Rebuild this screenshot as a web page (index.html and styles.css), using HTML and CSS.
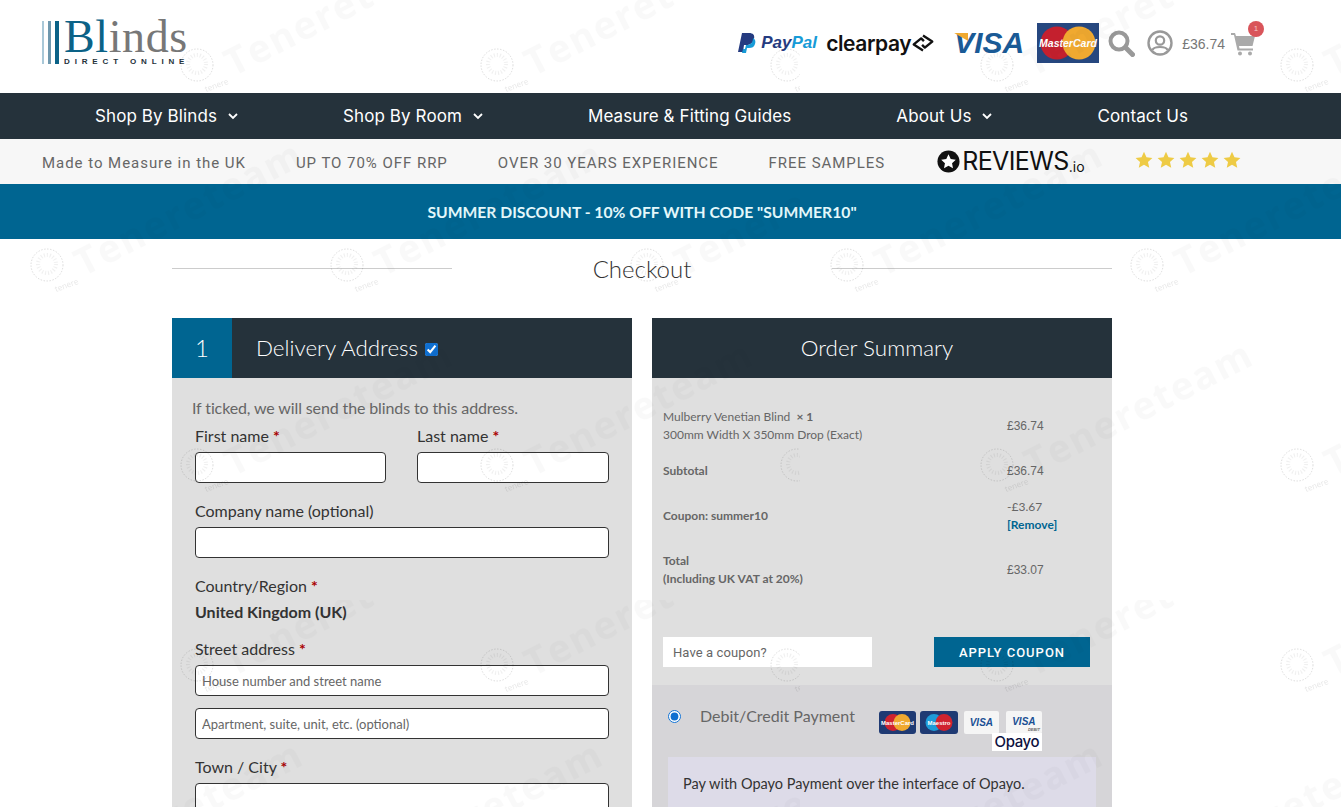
FILE: index.html
```html
<!DOCTYPE html>
<html lang="en">
<head>
  <meta charset="UTF-8">
  <meta name="viewport" content="width=device-width, initial-scale=1.0">
  <title>Checkout - Blinds Direct Online</title>
  <link rel="stylesheet" href="styles.css">
</head>
<body>
<div class="page">

  <!-- Top header -->
  <header class="site-header">
    <a class="logo" href="#">
      <span class="logo-bars"><i></i><i></i><i></i></span>
      <span class="logo-text">
        <span class="logo-name"><b>Bl</b>inds</span>
        <span class="logo-sub">DIRECT ONLINE</span>
      </span>
    </a>
    <div class="header-right">
      <span class="paypal">
        <svg width="18" height="20" viewBox="0 0 18 20"><path fill="#253b80" d="M4 0h7c4 0 6 2 5 6-1 4-4 6-8 6H6l-1 7H0z"/><path fill="#179bd7" d="M15 5c2 1 3 3 2 6-1 3-3 4-6 4H9l-1 5H4l1-4h2l1-4h1c3 0 6-2 6-7z"/></svg>
        <span class="paypal-text"><b>Pay</b><i>Pal</i></span>
      </span>
      <span class="clearpay">clearpay<svg width="24" height="22" viewBox="0 0 26 22"><path fill="none" stroke="#111" stroke-width="2.600" stroke-linejoin="round" d="M13 3l10 6.500-8 6.500-3-3M13 19L3 12.500l8-6.500 3 3"/></svg></span>
      <span class="visa"><span class="visa-corner"></span>VISA</span>
      <svg class="mastercard" width="62" height="40" viewBox="0 0 62 40">
        <rect width="62" height="40" fill="#26477f"/>
        <circle cx="20" cy="20" r="16.500" fill="#c4202e"/>
        <circle cx="42" cy="20" r="16.500" fill="#f0a930"/>
        <text x="31" y="24" class="mc-text">MasterCard</text>
      </svg>
      <svg class="icon-search" width="27" height="27" viewBox="0 0 27 27"><circle cx="11" cy="11" r="8.500" fill="none" stroke="#999" stroke-width="4"/><path d="M17.500 17.500l7 7" stroke="#999" stroke-width="5" stroke-linecap="round"/></svg>
      <svg class="icon-user" width="26" height="26" viewBox="0 0 26 26"><circle cx="13" cy="13" r="11.500" fill="none" stroke="#999" stroke-width="2.400"/><circle cx="13" cy="10.500" r="4.200" fill="none" stroke="#999" stroke-width="2.200"/><path d="M5.500 20c1.500-4 13.500-4 15 0" fill="none" stroke="#999" stroke-width="2.200"/></svg>
      <span class="cart-total">£36.74</span>
      <span class="cart">
        <svg width="25" height="24" viewBox="0 0 25 24"><path fill="#aaa" d="M0 1h4l1 3h19l-2.500 10H8l.5 2.500H22V18.500H6.500L3 3H0z"/><circle cx="9" cy="21.500" r="2" fill="#aaa"/><circle cx="19" cy="21.500" r="2" fill="#aaa"/></svg>
        <span class="cart-badge">1</span>
      </span>
    </div>
  </header>

  <!-- Main menu -->
  <nav class="main-nav">
    <a href="#">Shop By Blinds <svg class="chev" width="10" height="7" viewBox="0 0 10 7"><path d="M1 1l4 4 4-4" fill="none" stroke="#fff" stroke-width="1.800"/></svg></a>
    <a href="#">Shop By Room <svg class="chev" width="10" height="7" viewBox="0 0 10 7"><path d="M1 1l4 4 4-4" fill="none" stroke="#fff" stroke-width="1.800"/></svg></a>
    <a href="#">Measure &amp; Fitting Guides</a>
    <a href="#">About Us <svg class="chev" width="10" height="7" viewBox="0 0 10 7"><path d="M1 1l4 4 4-4" fill="none" stroke="#fff" stroke-width="1.800"/></svg></a>
    <a href="#">Contact Us</a>
  </nav>

  <!-- USP strip -->
  <div class="usp-strip">
    <span>Made to Measure in the UK</span>
    <span>UP TO 70% OFF RRP</span>
    <span>OVER 30 YEARS EXPERIENCE</span>
    <span>FREE SAMPLES</span>
    <span class="reviews">
      <svg width="23" height="23" viewBox="0 0 24 24"><circle cx="12" cy="12" r="11.500" fill="#111"/><path fill="#fff" d="M12 4.500l2.300 4.900 5.300.7-3.900 3.700 1 5.300-4.700-2.600-4.700 2.600 1-5.300-3.900-3.700 5.300-.7z"/></svg>
      <span class="reviews-name">REVIEWS</span><span class="reviews-io">.io</span>
    </span>
    <span class="stars">
      <svg width="18" height="18" viewBox="0 0 24 24"><path id="star" fill="#eecb45" d="M12 1l3.300 7.300 7.900.9-5.900 5.300 1.700 7.800L12 18.300 5 22.300l1.700-7.800L.8 9.200l7.900-.9z"/></svg>
      <svg width="18" height="18" viewBox="0 0 24 24"><use href="#star"/></svg>
      <svg width="18" height="18" viewBox="0 0 24 24"><use href="#star"/></svg>
      <svg width="18" height="18" viewBox="0 0 24 24"><use href="#star"/></svg>
      <svg width="18" height="18" viewBox="0 0 24 24"><use href="#star"/></svg>
    </span>
  </div>

  <div class="promo">SUMMER DISCOUNT - 10% OFF WITH CODE "SUMMER10"</div>

  <div class="checkout-title"><span>Checkout</span></div>

  <div class="columns">

    <!-- Delivery form -->
    <section class="col">
      <div class="col-head">
        <span class="step">1</span>
        <h2>Delivery Address</h2>
        <input type="checkbox" class="ship-check" checked>
      </div>
      <div class="col-body form-body">
        <p class="hint">If ticked, we will send the blinds to this address.</p>
        <div class="field-row">
          <div class="field">
            <label>First name <em>*</em></label>
            <input type="text">
          </div>
          <div class="field">
            <label>Last name <em>*</em></label>
            <input type="text">
          </div>
        </div>
        <div class="field">
          <label>Company name (optional)</label>
          <input type="text">
        </div>
        <div class="field country">
          <label>Country/Region <em>*</em></label>
          <strong>United Kingdom (UK)</strong>
        </div>
        <div class="field">
          <label>Street address <em>*</em></label>
          <input type="text" placeholder="House number and street name">
          <input type="text" class="second-line" placeholder="Apartment, suite, unit, etc. (optional)">
        </div>
        <div class="field">
          <label>Town / City <em>*</em></label>
          <input type="text">
        </div>
      </div>
    </section>

    <!-- Order summary -->
    <section class="col">
      <div class="col-head summary-head">
        <h2>Order Summary</h2>
      </div>
      <div class="col-body summary-body">
        <table class="order-table">
          <tr>
            <td>Mulberry Venetian Blind &nbsp;<b>× 1</b><br>300mm Width X 350mm Drop (Exact)</td>
            <td class="price">£36.74</td>
          </tr>
          <tr>
            <th>Subtotal</th>
            <td class="price">£36.74</td>
          </tr>
          <tr>
            <th>Coupon: summer10</th>
            <td>-£3.67<br><a href="#">[Remove]</a></td>
          </tr>
          <tr>
            <th>Total<br>(Including UK VAT at 20%)</th>
            <td class="price">£33.07</td>
          </tr>
        </table>
        <div class="coupon-row">
          <input type="text" placeholder="Have a coupon?">
          <button type="button">APPLY COUPON</button>
        </div>
      </div>
      <div class="payment">
        <div class="payment-head">
          <input type="radio" checked>
          <span class="payment-name">Debit/Credit Payment</span>
          <span class="cards">
            <svg width="37" height="23" viewBox="0 0 37 23"><rect width="37" height="23" rx="3" fill="#1f3a73"/><circle cx="14" cy="11.500" r="8.500" fill="#d0232f"/><circle cx="23" cy="11.500" r="8.500" fill="#f0a930"/><text x="18.500" y="14" class="card-mini">MasterCard</text></svg>
            <svg width="38" height="23" viewBox="0 0 38 23"><rect width="38" height="23" rx="3" fill="#1f3a73"/><circle cx="14" cy="11.500" r="8.500" fill="#1d9bd8"/><circle cx="24" cy="11.500" r="8.500" fill="#d0232f"/><text x="19" y="14" class="card-mini">Maestro</text></svg>
            <span class="card-visa">VISA</span>
            <span class="card-visa debit">VISA<small>DEBIT</small></span>
            <span class="opayo">Opayo</span>
          </span>
        </div>
        <div class="payment-desc">Pay with Opayo Payment over the interface of Opayo.</div>
      </div>
    </section>
  </div>

  <!-- Screenshot watermark -->
  <svg class="watermark" width="1341" height="807">
    <defs>
      <g id="wm">
        <circle cx="0" cy="0" r="16" fill="none" stroke="#000" stroke-opacity=".12" stroke-width="1" stroke-dasharray="1.500 1.500"/>
        <circle cx="0" cy="-1" r="9" fill="none" stroke="#000" stroke-opacity=".06" stroke-width="4" stroke-dasharray="1 2"/>
        <text x="9" y="27" class="wm-small" transform="rotate(-20 9 27)">tenere</text>
        <text x="36" y="12" class="wm-big" transform="rotate(-27 36 12)">Tenereteam</text>
      </g>
      <pattern id="wm-tile" width="800" height="600" patternUnits="userSpaceOnUse">
        <use href="#wm" x="197" y="65"/>
        <use href="#wm" x="497" y="65"/>
        <use href="#wm" x="787" y="65"/>
        <use href="#wm" x="47" y="265"/>
        <use href="#wm" x="347" y="265"/>
        <use href="#wm" x="647" y="265"/>
        <use href="#wm" x="197" y="465"/>
        <use href="#wm" x="497" y="465"/>
        <use href="#wm" x="797" y="465"/>
      </pattern>
    </defs>
    <rect width="1341" height="807" fill="url(#wm-tile)"/>
  </svg>
</div>
</body>
</html>
```

FILE: styles.css
```css
/* Reset */
* {
  box-sizing: border-box;
  margin: 0;
  padding: 0;
}

body {
  font-family: 'Lato', sans-serif;
  color: #333;
  background: #fff;
}

.page {
  position: relative;
  height: 100vh;
  overflow: hidden;
}

a {
  text-decoration: none;
}

/* Header */
.site-header {
  height: 93px;
  display: flex;
  justify-content: space-between;
  padding: 20px 85px 0 42px;
}

.logo {
  display: flex;
  align-items: flex-start;
  gap: 5px;
  height: 46px;
}

.logo-bars {
  display: flex;
  gap: 4px;
  height: 43px;
  margin-top: 1px;
}

.logo-bars i {
  width: 2px;
  background: #a9c8d8;
}

.logo-bars i:nth-child(2) {
  width: 3px;
  background: #6f98ae;
}

.logo-bars i:nth-child(3) {
  width: 4px;
  background: #0b6287;
}

.logo-text {
  display: flex;
  flex-direction: column;
}

.logo-name {
  font-family: 'Liberation Serif', serif;
  font-size: 46px;
  line-height: 34px;
  height: 38px;
  letter-spacing: .6px;
  color: #777;
}

.logo-name b {
  font-weight: 400;
  color: #0b6287;
}

.logo-sub {
  font-family: 'Liberation Sans', sans-serif;
  font-size: 8px;
  font-weight: 700;
  letter-spacing: 4.850px;
  line-height: 8px;
  color: #25323b;
  white-space: nowrap;
}

.header-right {
  display: flex;
  align-items: center;
  height: 46px;
  color: #777;
}

.paypal {
  display: flex;
  align-items: center;
  gap: 5px;
  width: 88px;
}

.paypal-text {
  font-family: 'Liberation Sans', sans-serif;
  font-size: 17px;
  font-style: italic;
  font-weight: 700;
}

.paypal-text b {
  color: #253b80;
}

.paypal-text i {
  color: #179bd7;
}

.clearpay {
  display: flex;
  align-items: center;
  width: 128px;
  font-family: 'Inter', sans-serif;
  font-size: 21px;
  font-weight: 600;
  letter-spacing: -.4px;
  color: #111;
}

.visa {
  position: relative;
  width: 83px;
  font-family: 'Liberation Sans', sans-serif;
  font-size: 30px;
  font-style: italic;
  font-weight: 700;
  letter-spacing: 0;
  color: #1a5a96;
}

.visa-corner {
  position: absolute;
  left: 0;
  top: 7px;
  width: 14px;
  height: 8px;
  background: #f0a930;
  clip-path: polygon(0 0, 100% 0, 100% 100%);
}

.mc-text {
  font-family: 'Liberation Sans', sans-serif;
  font-size: 10.500px;
  font-style: italic;
  font-weight: 700;
  fill: #fff;
  text-anchor: middle;
}

.icon-search {
  margin-left: 9px;
}

.icon-user {
  margin-left: 12px;
}

.cart-total {
  margin-left: 9px;
  font-family: 'Liberation Sans', sans-serif;
  font-size: 14px;
  color: #777;
  padding-top: 2px;
}

.cart {
  position: relative;
  display: flex;
  margin-left: 6px;
  padding-top: 2px;
}

.cart-badge {
  position: absolute;
  right: -8px;
  top: -9px;
  width: 16px;
  height: 16px;
  border-radius: 50%;
  background: #d9545a;
  color: #f5c5c5;
  font-family: 'Liberation Sans', sans-serif;
  font-size: 8px;
  line-height: 16px;
  text-align: center;
}

/* Main menu */
.main-nav {
  height: 46px;
  display: flex;
  align-items: center;
  gap: 105px;
  padding-left: 95px;
  background: #25323b;
}

.main-nav a {
  display: flex;
  align-items: center;
  font-family: 'Inter', sans-serif;
  font-size: 17px;
  letter-spacing: .1px;
  color: #fff;
  white-space: nowrap;
}

.chev {
  margin-left: 11px;
}

/* USP strip */
.usp-strip {
  height: 45px;
  display: flex;
  align-items: center;
  gap: 50px;
  padding: 2px 0 0 42px;
  background: #f7f7f7;
  font-family: 'Roboto', sans-serif;
  font-size: 15px;
  letter-spacing: .96px;
  color: #666;
  white-space: nowrap;
}

.reviews {
  display: flex;
  align-items: center;
  margin: -3px 0 0 2px;
  color: #111;
  letter-spacing: 0;
}

.reviews-name {
  font-family: 'Inter', sans-serif;
  font-size: 25px;
  font-weight: 400;
  letter-spacing: -.6px;
  margin-left: 2px;
}

.reviews-io {
  font-family: 'Inter', sans-serif;
  font-size: 14px;
  align-self: flex-end;
  margin-bottom: 1px;
}

.stars {
  display: flex;
  gap: 4px;
  margin-top: -5px;
}

/* Promo bar */
.promo {
  height: 55px;
  line-height: 57px;
  padding-right: 57px;
  background: #006591;
  color: #e4f8fb;
  font-size: 15.700px;
  font-weight: 700;
  text-align: center;
}

/* Page title */
.checkout-title {
  display: flex;
  align-items: center;
  width: 940px;
  height: 58px;
  margin: 0 0 21px 172px;
}

.checkout-title::before,
.checkout-title::after {
  content: "";
  flex: 0 0 280px;
  height: 1px;
  background: #ccc;
}

.checkout-title span {
  flex: 1;
  text-align: center;
  font-size: 24px;
  font-weight: 300;
  color: #333;
}

/* Two columns */
.columns {
  display: flex;
  gap: 20px;
  width: 940px;
  margin-left: 172px;
}

.col {
  flex: 0 0 460px;
}

.col-head {
  display: flex;
  align-items: center;
  height: 60px;
  background: #25323b;
  color: #fff;
}

.col-head h2 {
  padding-bottom: 2px;
  font-size: 22.400px;
  font-weight: 300;
}

.step {
  flex: 0 0 60px;
  height: 60px;
  line-height: 60px;
  text-align: center;
  background: #006591;
  font-size: 24px;
  font-weight: 300;
}

.step + h2 {
  margin-left: 24px;
}

.ship-check {
  width: 13px;
  height: 13px;
  margin-left: 7px;
  margin-top: 2px;
  accent-color: #0f6fd0;
}

.summary-head {
  justify-content: center;
  padding-right: 10px;
}

.col-body {
  background: #dfdfdf;
}

/* Form */
.form-body {
  padding: 20px 23px 40px;
}

.hint {
  margin: 0 0 9px -3px;
  font-size: 16px;
  line-height: 19px;
  letter-spacing: -.12px;
  color: #666;
}

.field-row {
  display: grid;
  grid-template-columns: 191px 192px;
  gap: 31px;
}

.field {
  margin-bottom: 18px;
}

.field label {
  display: block;
  font-size: 16px;
  line-height: 20px;
  margin-bottom: 6px;
  color: #333;
}

.field em {
  font-style: normal;
  font-weight: 700;
  color: #a00;
}

.field input {
  display: block;
  width: 100%;
  height: 31px;
  padding: 0 6px;
  border: 1px solid #333;
  border-radius: 4px;
  background: #fff;
  font-family: 'Lato', sans-serif;
  font-size: 13px;
}

.field input::placeholder {
  color: #666;
}

.field .second-line {
  margin-top: 12px;
}

.country {
  margin-bottom: 17px;
}

.country strong {
  display: block;
  font-size: 16px;
  line-height: 20px;
  color: #333;
}

/* Order table */
.summary-body {
  height: 307px;
  padding: 21px 11px 0;
}

.order-table {
  width: 100%;
  border-collapse: collapse;
  font-size: 12px;
  line-height: 18px;
  color: #666;
}

.order-table th,
.order-table td {
  padding: 9px 0;
  text-align: left;
  font-weight: 400;
}

.order-table th {
  font-weight: 700;
}

.order-table td:last-child {
  width: 94px;
}

.order-table b {
  font-weight: 700;
}

.order-table .price {
  font-family: 'Liberation Sans', sans-serif;
}

.order-table a {
  font-weight: 700;
  color: #006591;
}

.coupon-row {
  display: flex;
  justify-content: space-between;
  align-items: center;
  margin-top: 40px;
  padding-right: 11px;
}

.coupon-row input {
  width: 209px;
  height: 30px;
  padding: 0 10px;
  border: 0;
  background: #fff;
  font-family: 'Roboto', sans-serif;
  font-size: 13px;
  letter-spacing: .1px;
}

.coupon-row input::placeholder {
  color: #666;
}

.coupon-row button {
  width: 156px;
  height: 30px;
  border: 0;
  background: #006591;
  color: #fff;
  font-family: 'Roboto', sans-serif;
  font-size: 13px;
  font-weight: 500;
  letter-spacing: 1px;
}

/* Payment */
.payment {
  padding: 0 16px;
  height: 200px;
  background: #d6d5d8;
}

.payment-head {
  display: flex;
  align-items: flex-start;
  height: 72px;
  padding-top: 25px;
}

.payment-head input {
  width: 13px;
  height: 13px;
  accent-color: #0f6fd0;
}

.payment-name {
  margin-left: 19px;
  margin-top: -4px;
  font-size: 16px;
  line-height: 20px;
  color: #666;
}

.cards {
  position: relative;
  display: flex;
  gap: 4px;
  margin-left: 24px;
  margin-top: 1px;
}

.card-visa {
  position: relative;
  width: 35px;
  height: 23px;
  margin-left: 2px;
  background: #f5f5f5;
  border-radius: 2px;
  color: #1a4f94;
  font-family: 'Liberation Sans', sans-serif;
  font-size: 10px;
  font-style: italic;
  font-weight: 700;
  line-height: 23px;
  text-align: center;
}

.card-visa.debit {
  width: 36px;
  margin-left: 3px;
  line-height: 22px;
}

.card-visa small {
  position: absolute;
  right: 2px;
  bottom: 2px;
  font-size: 4px;
  line-height: 5px;
  color: #666;
}

.card-mini {
  font-family: 'Liberation Sans', sans-serif;
  font-size: 6px;
  font-weight: 700;
  fill: #fff;
  text-anchor: middle;
}

.opayo {
  position: absolute;
  right: 0;
  top: 22px;
  width: 50px;
  height: 18px;
  background: #fff;
  color: #0d1040;
  font-family: 'Inter', sans-serif;
  font-size: 15px;
  font-weight: 500;
  letter-spacing: -.4px;
  line-height: 17px;
  text-align: center;
}

.payment-desc {
  height: 60px;
  padding: 17px 15px;
  background: #dddbe8;
  font-size: 14.500px;
  line-height: 20px;
  color: #333;
}

/* Watermark */
.watermark {
  position: absolute;
  left: 0;
  top: 0;
  pointer-events: none;
}

.wm-big {
  font-family: 'Open Sans', sans-serif;
  font-size: 38px;
  font-weight: 700;
  letter-spacing: 2px;
  fill: #000;
  fill-opacity: .025;
}

.wm-small {
  font-family: 'Open Sans', sans-serif;
  font-size: 8px;
  fill: #000;
  fill-opacity: .1;
}
```
